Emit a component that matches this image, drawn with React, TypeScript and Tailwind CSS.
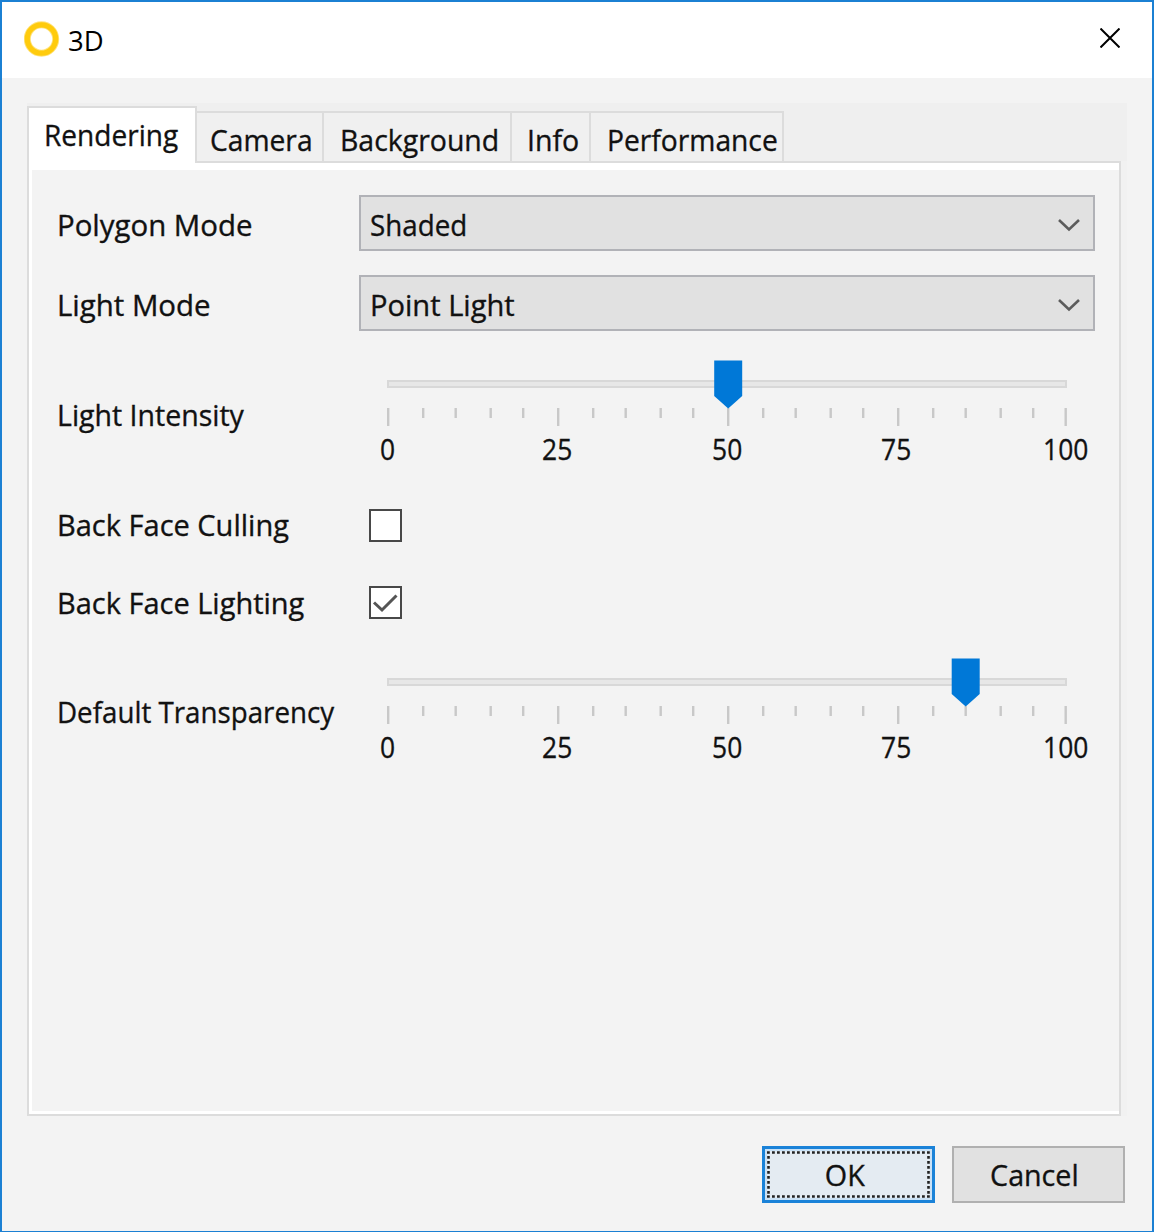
import type { ReactNode } from "react";
import clsx from "clsx";

type SliderProps = {
  value: number;
};

const TICKS = [388, 423, 455.5, 490.5, 523, 558, 593, 625.5, 660.5, 693, 728, 763, 795.5, 830.5, 863, 898, 933, 965.5, 1000.5, 1033, 1065.5];

const TABS = [
  { name: "Camera", className: "w-[127px] pl-[13px]", text: "scale-x-[0.94]" },
  { name: "Background", className: "w-[188px] pl-[16px]", text: "scale-x-[0.948]" },
  { name: "Info", className: "w-[79px] pl-[15px]", text: "scale-x-[0.95]" },
  { name: "Performance", className: "w-[193px] pl-[16px]", text: "scale-x-[0.94]" },
];

const Text = ({ children, className }: { children: ReactNode; className?: string }) => (
  <span className={clsx("inline-block origin-left whitespace-nowrap", className)}>{children}</span>
);

const Row = ({ label, text, className, children }: { label: string; text: string; className: string; children: ReactNode }) => (
  <div className={clsx("flex items-center", className)}>
    <div className="w-[302px] shrink-0">
      <Text className={text}>{label}</Text>
    </div>
    {children}
  </div>
);

const Select = ({ value, text }: { value: string; text: string }) => (
  <button className="flex h-[56px] w-[736px] items-center justify-between border-2 border-[#b1b2b7] bg-[#e1e1e1] pt-[3px] pr-[12px] pl-[9px]">
    <Text className={text}>{value}</Text>
    <svg width="24" height="14" viewBox="0 0 24 14" fill="none">
      <path d="M2 2L12 11.5L22 2" stroke="#5c5c5c" strokeWidth="2.6" />
    </svg>
  </button>
);

const Slider = ({ value }: SliderProps) => {
  const x = TICKS[value / 5] - 387;

  return (
    <div className="ml-[28px] h-[110px] w-[680px]">
      <svg width="680" height="70" viewBox="0 0 680 70" className="block overflow-visible">
        <rect x="1" y="21" width="678" height="6" fill="#e7e7e7" stroke="#d8d8d8" strokeWidth="2" />
        {TICKS.map((tick, i) => (
          <rect key={tick} x={tick - 388} y="48" width="2.4" height={i % 5 === 0 ? 18 : 10} fill="#c8c8c8" />
        ))}
        <path d={`M${x - 13.8} 0.5h28v35.5l-14 12.5l-14 -12.5z`} fill="#0078d7" />
      </svg>
      <div className="-mt-px flex h-[40px] w-[679px] justify-between pl-px">
        {[0, 25, 50, 75, 100].map((n) => (
          <div key={n} className="flex w-0 justify-center leading-[40px]">
            <span className="scale-x-[0.88]">{n}</span>
          </div>
        ))}
      </div>
    </div>
  );
};

const Checkbox = ({ checked }: { checked?: boolean }) => (
  <div className="ml-[10px] h-[33px] w-[33px] border-2 border-[#484848] bg-white">
    {checked && (
      <svg width="29" height="29" viewBox="0 0 29 29" fill="none">
        <path d="M3 14.5L11 22L25.5 7.5" stroke="#555" strokeWidth="3" />
      </svg>
    )}
  </div>
);

const App = () => {
  return (
    <div className="flex h-[1232px] w-[1154px] flex-col border-2 border-b border-[#1b80d3] bg-[#f3f3f3] font-['Open_Sans','Noto_Sans',sans-serif] text-[30px] leading-[40px] text-[#111] [-webkit-text-stroke:0.35px]">
      <header className="flex h-[76px] shrink-0 items-center bg-white pr-[32px] pl-[22px]">
        <svg width="36" height="36" viewBox="0 0 36 36" fill="none" className="-mt-[2px]">
          <circle cx="17.5" cy="18" r="14.2" stroke="#ffe27a" strokeWidth="7" />
          <circle cx="17.5" cy="18" r="14.2" stroke="#ffcb0d" strokeWidth="5.2" />
        </svg>
        <h1 className="ml-[8px] text-[28px] text-black [-webkit-text-stroke:0px]">
          <Text className="scale-x-[0.98]">3D</Text>
        </h1>
        <svg width="20" height="20" viewBox="0 0 20 20" className="-mt-[4px] ml-auto">
          <path d="M0.5 0.5L19.5 19.5M19.5 0.5L0.5 19.5" stroke="#000" strokeWidth="2" />
        </svg>
      </header>

      <main className="mt-[25px] ml-[25px] h-[1013px] w-[1100px] shrink-0 bg-gradient-to-r from-[#f3f3f3] from-50% to-[#f1f1f1] to-50%">
        <div className="flex h-[58px] items-end bg-[#efefef]">
          <div className="z-10 -mb-[2px] h-[57px] w-[170px] border-2 border-b-0 border-[#dcdcdc] bg-white pt-[7px] pl-[15px]">
            <Text className="scale-x-[0.935]">Rendering</Text>
          </div>
          {TABS.map((tab) => (
            <div key={tab.name} className={clsx("h-[50px] border-t-2 border-r-2 border-[#dcdcdc] bg-[#f0f0f0] pt-[7px]", tab.className)}>
              <Text className={tab.text}>{tab.name}</Text>
            </div>
          ))}
        </div>
        <section className="h-[955px] w-[1094px] border-2 border-[#dcdcdc] bg-white pt-[7px] pb-[3px] pl-[3px]">
          <div className="h-full bg-[#f3f3f3] pt-[25px] pl-[25px]">
            <Row label="Polygon Mode" text="translate-y-[2px] scale-x-[0.98]" className="h-[56px]">
              <Select value="Shaded" text="scale-x-[0.925]" />
            </Row>
            <Row label="Light Mode" text="translate-y-[2px] scale-x-[0.98]" className="mt-[24px] h-[56px]">
              <Select value="Point Light" text="scale-x-[0.97]" />
            </Row>
            <Row label="Light Intensity" text="scale-x-[0.95]" className="mt-[29px] h-[110px]">
              <Slider value={50} />
            </Row>
            <Row label="Back Face Culling" text="scale-x-[0.967]" className="mt-[35px] h-[40px]">
              <Checkbox />
            </Row>
            <Row label="Back Face Lighting" text="translate-y-px scale-x-[0.966]" className="mt-[37px] h-[40px]">
              <Checkbox checked />
            </Row>
            <Row label="Default Transparency" text="-translate-y-px scale-x-[0.924]" className="mt-[36px] h-[110px]">
              <Slider value={85} />
            </Row>
          </div>
        </section>
      </main>

      <footer className="mt-[30px] mr-[27px] flex justify-end gap-[17px]">
        <button className="relative h-[57px] w-[173px] border-[3px] border-[#1a82d8] bg-[#e4ebf2]">
          <svg width="167" height="51" viewBox="0 0 167 51" fill="none" className="absolute top-0 left-0">
            <rect x="1" y="1" width="165" height="49" stroke="#c9e1f6" strokeWidth="2" />
            <path d="M2 3.5H165M2 47.5H165M3.5 7V45M163.5 7V45" stroke="#222" strokeWidth="2.6" strokeDasharray="2.8 2.2" />
          </svg>
          <span className="inline-block -translate-x-[4px] scale-x-[0.96]">OK</span>
        </button>
        <button className="h-[57px] w-[173px] border-2 border-[#b0b0b0] bg-[#e1e1e1]">
          <span className="inline-block -translate-x-[4px] scale-x-[0.955]">Cancel</span>
        </button>
      </footer>
    </div>
  );
};

export default App;
